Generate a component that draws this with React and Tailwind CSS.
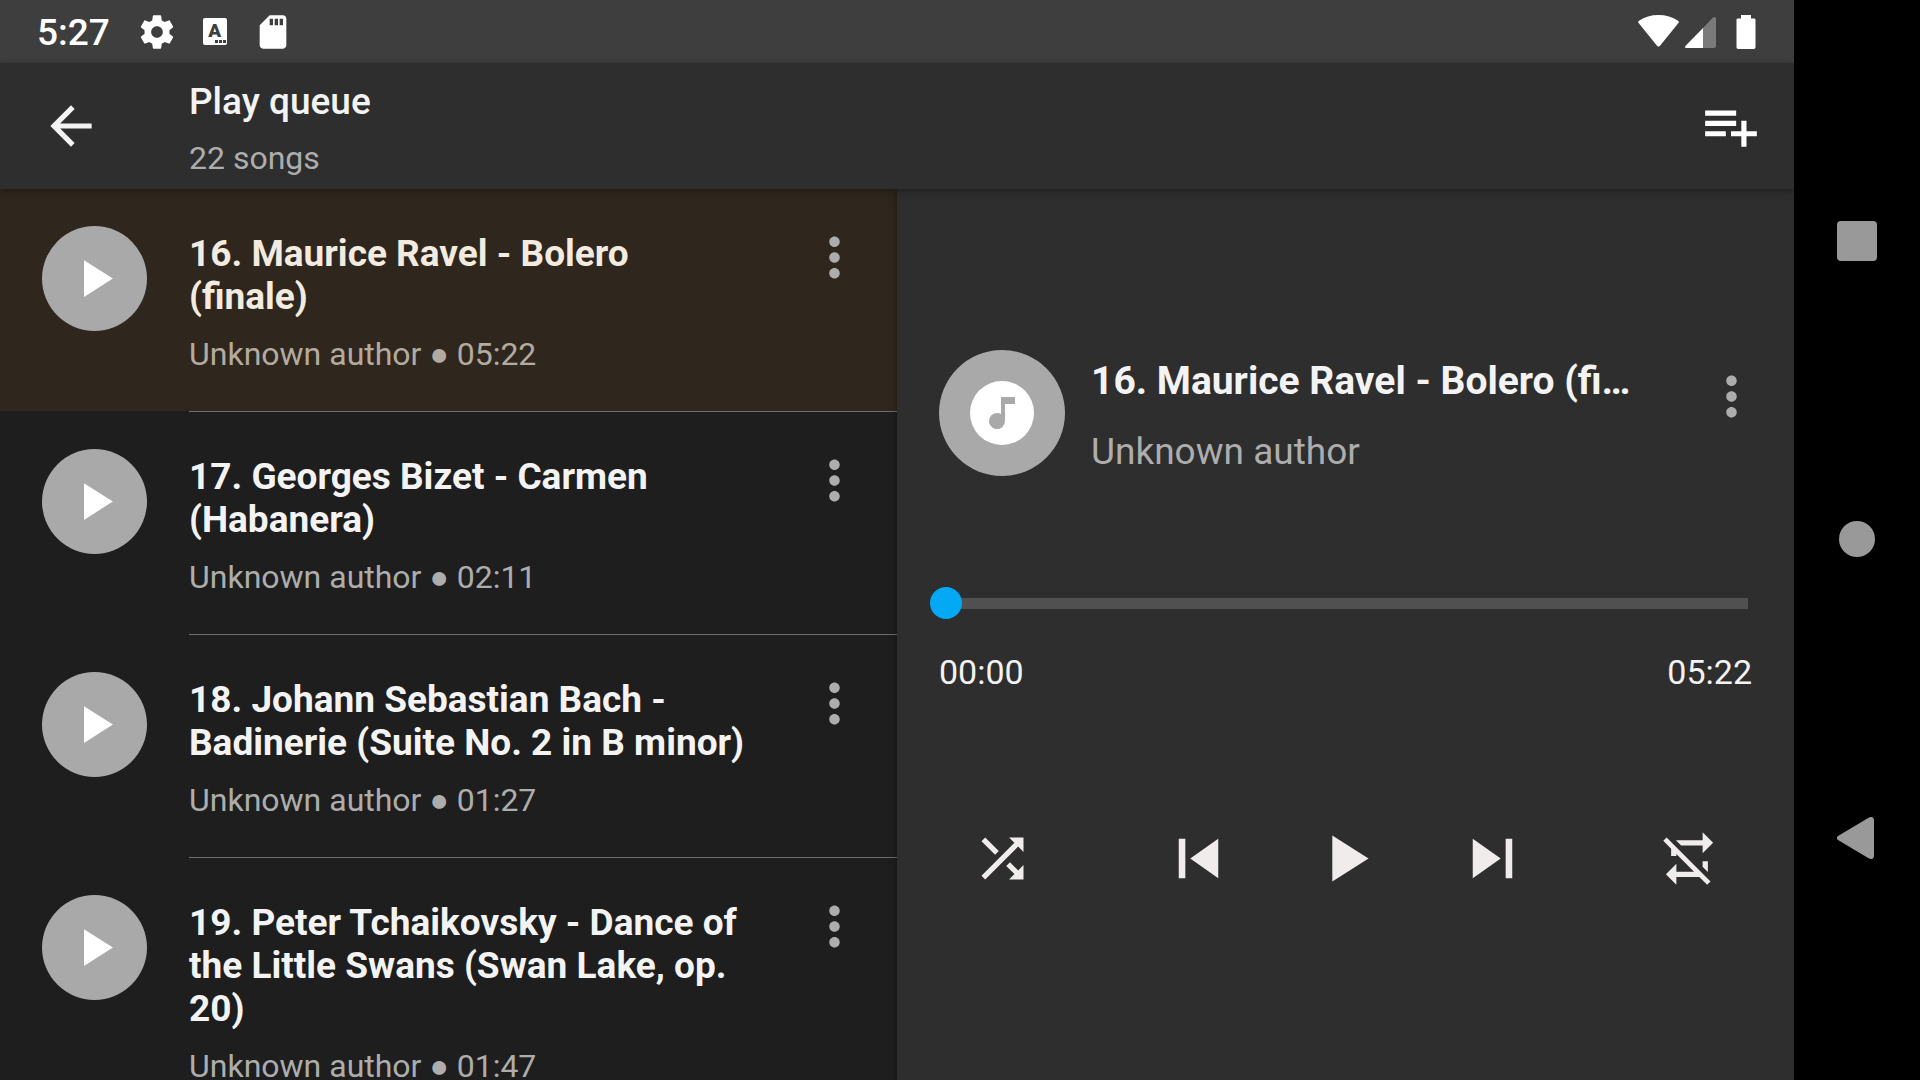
import { useState } from 'react';

const SONGS = [
  { id: 16, title: '16. Maurice Ravel - Bolero (finale)', author: 'Unknown author', length: '05:22' },
  { id: 17, title: '17. Georges Bizet - Carmen (Habanera)', author: 'Unknown author', length: '02:11' },
  { id: 18, title: '18. Johann Sebastian Bach - Badinerie (Suite No. 2 in B minor)', author: 'Unknown author', length: '01:27' },
  { id: 19, title: '19. Peter Tchaikovsky - Dance of the Little Swans (Swan Lake, op. 20)', author: 'Unknown author', length: '01:47' },
];

const ICONS = {
  back: 'M20 11H7.83l5.59-5.59L12 4l-8 8 8 8 1.41-1.41L7.83 13H20v-2z',
  playlistAdd: 'M14 10H2v2h12v-2zm0-4H2v2h12V6zm4 8v-4h-2v4h-4v2h4v4h2v-4h4v-2h-4zM2 16h8v-2H2v2z',
  more: 'M12 8c1.1 0 2-.9 2-2s-.9-2-2-2-2 .9-2 2 .9 2 2 2zm0 2c-1.1 0-2 .9-2 2s.9 2 2 2 2-.9 2-2-.9-2-2-2zm0 6c-1.1 0-2 .9-2 2s.9 2 2 2 2-.9 2-2-.9-2-2-2z',
  play: 'M8 5v14l11-7z',
  previous: 'M6 6h2v12H6zm3.5 6l8.5 6V6z',
  next: 'M6 18l8.5-6L6 6v12zM16 6v12h2V6h-2z',
  shuffle: 'M10.59 9.17L5.41 4 4 5.41l5.17 5.17 1.42-1.41zM14.5 4l2.04 2.04L4 18.59 5.41 20 17.96 7.46 20 9.5V4h-5.5zm.33 9.41l-1.41 1.41 3.13 3.13L14.5 20H20v-5.5l-2.04 2.04-3.13-3.13z',
  repeatOff: 'M2 5.27L3.28 4 20 20.72 18.73 22l-3-3H7v3l-4-4 4-4v3h6.73L7 10.27V11H5V8.27L2 5.27M17 13h2v4.18l-2-2V13M17 5V2l4 4-4 4V7H8.82l-2-2H17z',
  settings: 'M19.43 12.98c.04-.32.07-.64.07-.98s-.03-.66-.07-.98l2.11-1.65c.19-.15.24-.42.12-.64l-2-3.46c-.12-.22-.39-.3-.61-.22l-2.49 1c-.52-.4-1.08-.73-1.69-.98l-.38-2.65C14.46 2.18 14.25 2 14 2h-4c-.25 0-.46.18-.49.42l-.38 2.65c-.61.25-1.17.59-1.69.98l-2.49-1c-.23-.09-.49 0-.61.22l-2 3.46c-.13.22-.07.49.12.64l2.11 1.65c-.04.32-.07.65-.07.98s.03.66.07.98l-2.11 1.65c-.19.15-.24.42-.12.64l2 3.46c.12.22.39.3.61.22l2.49-1c.52.4 1.08.73 1.69.98l.38 2.65c.03.24.24.42.49.42h4c.25 0 .46-.18.49-.42l.38-2.65c.61-.25 1.17-.59 1.69-.98l2.49 1c.23.09.49 0 .61-.22l2-3.46c.12-.22.07-.49-.12-.64l-2.11-1.65zM12 15.5c-1.93 0-3.5-1.57-3.5-3.5s1.57-3.5 3.5-3.5 3.5 1.57 3.5 3.5-1.57 3.5-3.5 3.5z',
  sdCard: 'M18 2h-8L4.02 8 4 20c0 1.1.9 2 2 2h12c1.1 0 2-.9 2-2V4c0-1.1-.9-2-2-2zm-6 6h-2V4h2v4zm3 0h-2V4h2v4zm3 0h-2V4h2v4z',
};

const Icon = ({ name, className }) => (
  <svg viewBox="0 0 24 24" fill="currentColor" className={className} aria-hidden="true">
    <path d={ICONS[name]} />
  </svg>
);

const StatusBar = () => (
  <div className="flex h-[63px] shrink-0 items-center bg-[#3e3e3e] pl-[37px] pr-[38px] text-white">
    <span className="pt-0.5 text-[37px] font-medium leading-[43px]">5:27</span>
    <div className="ml-[27px] flex items-center gap-[18px]">
      <Icon name="settings" className="size-10" />
      <div className="flex w-10 justify-center">
        {/* keyboard notification */}
        <div className="flex h-[27px] w-6 flex-col items-center rounded-xs bg-white pt-1 text-[#3e3e3e]">
          <span className="text-[19px] font-black leading-[18px]">A</span>
          <div className="flex gap-px self-end pr-px">
            <span className="size-[3px] bg-[#3e3e3e]" />
            <span className="size-[3px] bg-[#3e3e3e]" />
            <span className="size-[3px] bg-[#3e3e3e]" />
          </div>
        </div>
      </div>
      <Icon name="sdCard" className="size-10" />
    </div>
    <div className="ml-auto flex items-center">
      <svg viewBox="0 0 41 34" fill="currentColor" className="h-[34px] w-[41px]" aria-hidden="true">
        <path d="M1 8.500C-.2 7.400 0 6.500 1 5.800 6.500 2 13 0 20.500 0S34.500 2 40 5.800c1 .7 1.200 1.600 0 2.700L22 30.800c-1 1.100-2 1.100-3 0z" />
      </svg>
      <svg viewBox="0 0 31 34" className="ml-[6px] h-[34px] w-[31px]" aria-hidden="true">
        <path d="M18 13L28 2.600c1.500-1.200 3-.6 3 1.200V31c0 1.300-.7 2-2 2H18z" fill="#7a7a7a" />
        <path d="M18 13v20H1.500C0 33-.4 31.800.6 30.800z" fill="#fff" />
      </svg>
      <svg viewBox="0 0 20 34" fill="currentColor" className="ml-5 h-[34px] w-5" aria-hidden="true">
        <path d="M5 0h10v3.500h3c1 0 1.500.5 1.500 1.500v27c0 1.200-.6 2-1.800 2H2.300C1.100 34 .5 33.200.5 32V5c0-1 .5-1.500 1.500-1.500h3z" />
      </svg>
    </div>
  </div>
);

const Toolbar = () => (
  <header className="relative z-20 flex h-[126px] shrink-0 items-center bg-[#2e2e2e] pr-8 text-[#f3f3f3] shadow-[0_2px_8px_rgba(0,0,0,0.35)]">
    <button type="button" aria-label="Back" className="flex w-[141px] justify-center">
      <Icon name="back" className="size-[62px]" />
    </button>
    <div className="ml-12 flex-1 self-start pt-[17px]">
      <h1 className="text-[37px] font-medium leading-[43px]">Play queue</h1>
      <p className="mt-4 text-[32px] leading-[38px] text-[#adadad]">22 songs</p>
    </div>
    <button type="button" aria-label="Add to playlist" className="text-white">
      <Icon name="playlistAdd" className="size-[62px]" />
    </button>
  </header>
);

const SongRow = ({ song, active }) => (
  <li className={active ? 'bg-[#2f271d]' : ''}>
    <div className="flex items-start pl-[42px] pr-[31px] pt-[37px]">
      <button type="button" aria-label={`Play ${song.title}`} className="flex size-[105px] shrink-0 items-center justify-center rounded-full bg-[#a9a9a9] text-white">
        <Icon name="play" className="size-[63px]" />
      </button>
      <div className="ml-[42px] mr-[52px] flex-1 pt-[6px] pb-[38px]">
        <h2 className={`text-[37px] font-bold leading-[43px] ${active ? 'text-[#f4ebe0]' : 'text-[#f3f3f3]'}`}>{song.title}</h2>
        <p className={`mt-[17px] text-[32px] leading-[38px] ${active ? 'text-[#b4aba0]' : 'text-[#adadad]'}`}>
          {song.author} ● {song.length}
        </p>
      </div>
      <button type="button" aria-label="Song options" className="text-[#adadad]">
        <Icon name="more" className="size-[63px]" />
      </button>
    </div>
    <div className="flex bg-[#1e1e1e] pl-[189px]">
      <div className="h-px flex-1 bg-[#6e6e6e]" />
    </div>
  </li>
);

const Player = ({ song }) => {
  const [position, setPosition] = useState(0);

  return (
    <section className="relative z-10 w-1/2 shrink-0 bg-[#2e2e2e] pt-[161px] text-[#f3f3f3] shadow-[0_2px_8px_rgba(0,0,0,0.35)]">
      <div className="flex items-start pl-[42px] pr-[31px]">
        <div className="flex size-[126px] shrink-0 items-center justify-center rounded-full bg-[#a9a9a9]">
          <svg viewBox="0 0 64 64" className="size-16" aria-hidden="true">
            <circle cx="32" cy="32" r="32" fill="#fff" />
            <path d="M31 16h14v7H35v17a8 8 0 1 1-4-6.900z" fill="#a9a9a9" />
          </svg>
        </div>
        <div className="ml-[26px] mr-[62px] min-w-0 flex-1 pt-2">
          <h2 className="truncate text-[39px] font-bold leading-[46px]">{song.title}</h2>
          <p className="mt-[26px] text-[37px] leading-[43px] text-[#adadad]">{song.author}</p>
        </div>
        <button type="button" aria-label="Track options" className="mt-[15px] text-[#adadad]">
          <Icon name="more" className="size-[63px]" />
        </button>
      </div>

      <div className="mt-[111px] pl-[33px] pr-[30px]">
        <input
          type="range"
          min="0"
          max="322"
          value={position}
          onChange={e => setPosition(Number(e.target.value))}
          aria-label="Position"
          className="block h-8 w-full appearance-none [background:linear-gradient(#505050,#505050)_center/calc(100%-32px)_11px_no-repeat] [&::-webkit-slider-thumb]:size-8 [&::-webkit-slider-thumb]:appearance-none [&::-webkit-slider-thumb]:rounded-full [&::-webkit-slider-thumb]:bg-[#03a9f4]"
        />
      </div>
      <div className="mt-[33px] flex justify-between px-[42px] text-[34px] leading-10">
        <span>00:00</span>
        <span>{song.length}</span>
      </div>

      <div className="mt-[127px] flex items-center justify-between px-[42px] text-[#f0ecec]">
        <button type="button" aria-label="Shuffle" className="flex w-[126px] justify-center">
          <Icon name="shuffle" className="size-[63px]" />
        </button>
        <div className="flex">
          <button type="button" aria-label="Previous" className="flex w-[147px] justify-center">
            <Icon name="previous" className="size-[79px]" />
          </button>
          <button type="button" aria-label="Play" className="flex w-[147px] justify-center">
            <Icon name="play" className="size-[79px]" />
          </button>
          <button type="button" aria-label="Next" className="flex w-[147px] justify-center">
            <Icon name="next" className="size-[79px]" />
          </button>
        </div>
        <button type="button" aria-label="Repeat off" className="flex w-[126px] justify-center">
          <Icon name="repeatOff" className="size-[63px]" />
        </button>
      </div>
    </section>
  );
};

const NavigationBar = () => (
  <nav className="flex w-[126px] shrink-0 flex-col items-center justify-between bg-black pt-[209px] pb-[211px] text-[#999999]">
    <button type="button" aria-label="Recent apps" className="flex size-[63px] items-center justify-center">
      <span className="size-10 rounded-sm bg-current" />
    </button>
    <button type="button" aria-label="Home" className="flex size-[63px] items-center justify-center">
      <span className="size-9 rounded-full bg-current" />
    </button>
    <button type="button" aria-label="Back" className="flex size-[63px] items-center justify-center">
      <svg viewBox="0 0 40 42" fill="currentColor" className="h-[42px] w-10" aria-hidden="true">
        <path d="M1 19L32 .5C34.500-.8 37 .5 37 3v36c0 2.500-2.500 3.800-5 2.500L1 23c-1.500-1-1.500-3 0-4z" />
      </svg>
    </button>
  </nav>
);

export default function App() {
  const current = SONGS[0];

  return (
    <div className="flex h-screen overflow-hidden bg-black font-[Roboto,sans-serif]">
      <div className="flex min-w-0 flex-1 flex-col overflow-hidden">
        <StatusBar />
        <Toolbar />
        <main className="flex min-h-0 flex-1">
          <ul className="w-1/2 overflow-hidden bg-[#1e1e1e]">
            {SONGS.map(song => (
              <SongRow key={song.id} song={song} active={song.id === current.id} />
            ))}
          </ul>
          <Player song={current} />
        </main>
      </div>
      <NavigationBar />
    </div>
  );
}
